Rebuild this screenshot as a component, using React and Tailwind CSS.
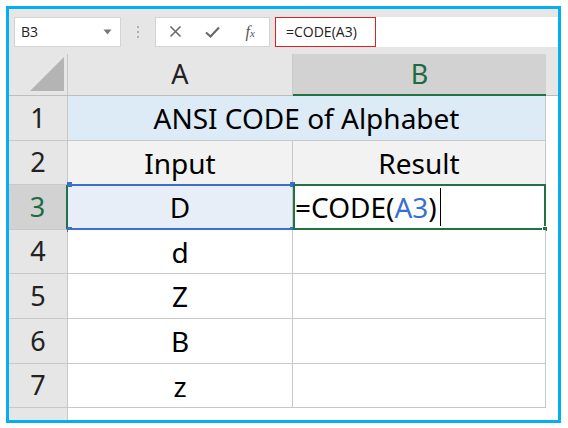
import React from "react";

const rowHeights = [45, 44, 45, 44, 45, 45, 44];

const cellFont = { fontFamily: '"Noto Sans", "Open Sans", sans-serif' };

const Handle = ({ className }) => (
  <div className={`absolute w-[5px] h-[5px] ${className}`} />
);

const Toolbar = () => (
  <div className="flex items-center h-[45px] pl-[5px] gap-0 bg-[#e6e6e6]">
    <div className="flex items-center justify-between w-[107px] h-[30px] bg-white border border-[#d4d4d4] pl-[6px] pr-[8px] text-[14px] text-[#222]" style={{ fontFamily: '"Open Sans", sans-serif' }}>
      <span>B3</span>
      <svg width="9" height="6" viewBox="0 0 9 6">
        <path d="M0.5 0.5 L8.5 0.5 L4.5 5.5 Z" fill="#777" />
      </svg>
    </div>
    <div className="flex flex-col items-center justify-center gap-[3px] w-[34px]">
      <div className="w-[2px] h-[2px] bg-[#b0b0b0]" />
      <div className="w-[2px] h-[2px] bg-[#b0b0b0]" />
      <div className="w-[2px] h-[2px] bg-[#b0b0b0]" />
    </div>
    <div className="flex items-center w-[115px] h-[30px] bg-white border border-[#d4d4d4]">
      <div className="w-[38px] flex justify-center pl-[2px]">
        <svg width="13" height="13" viewBox="0 0 13 13">
          <path d="M1.5 1.5 L11.5 11.5 M11.5 1.5 L1.5 11.5" stroke="#6a6a6a" strokeWidth="1.6" />
        </svg>
      </div>
      <div className="w-[38px] flex justify-center">
        <svg width="15" height="12" viewBox="0 0 15 12">
          <path d="M1 6.5 L5.5 10.5 L14 1.5" stroke="#6a6a6a" strokeWidth="2.2" fill="none" />
        </svg>
      </div>
      <div className="w-[38px] flex justify-center text-[16px] italic text-[#555]" style={{ fontFamily: '"Liberation Serif", serif' }}>
        <span>f</span>
        <span className="text-[11px] mt-[5px]">x</span>
      </div>
    </div>
    <div className="flex-1 h-[30px] ml-[5px] bg-white flex items-center">
      <div className="h-[30px] w-[101px] border border-[#e02020] flex items-center pl-[10px] text-[14px] text-[#222]" style={{ fontFamily: '"Open Sans", sans-serif' }}>
        =CODE(A3)
      </div>
    </div>
  </div>
);

const HeaderRow = () => (
  <div className="flex h-[42px] bg-[#e6e6e6] border-b border-[#bdbdbd]">
    <div className="w-[59px] border-r border-[#c8c8c8] flex items-end justify-end pr-[3px] pb-[4px]">
      <svg width="34" height="34" viewBox="0 0 34 34">
        <path d="M34 0 L34 34 L0 34 Z" fill="#b4b4b4" />
      </svg>
    </div>
    <div className="w-[225px] border-r border-[#c8c8c8] flex items-center justify-center text-[27px] text-[#222]" style={cellFont}>
      A
    </div>
    <div className="w-[253px] bg-[#d2d2d2] border-b-2 border-[#217346] flex items-center justify-center text-[27px] text-[#1e6b3f] -mb-px" style={cellFont}>
      B
    </div>
    <div className="flex-1" />
  </div>
);

const RowHead = ({ n, h, active }) => (
  <div
    className={`w-[59px] flex items-center justify-center text-[27px] border-b border-[#c8c8c8] ${
      active ? "bg-[#d2d2d2] text-[#1e6b3f] border-r-2 border-r-[#217346]" : "bg-[#e6e6e6] text-[#222] border-r border-r-[#c8c8c8]"
    }`}
    style={{ ...cellFont, height: h }}
  >
    {n}
  </div>
);

const data = [
  null,
  ["Input", "Result"],
  ["D", ""],
  ["d", ""],
  ["Z", ""],
  ["B", ""],
  ["z", ""],
];

export default function App() {
  return (
    <div className="w-[568px] h-[428px] bg-white pt-[6px] pl-[6px]">
      <div className="w-[555px] h-[417px] border-[3px] border-[#00b0f0] bg-white flex flex-col overflow-hidden">
        <Toolbar />
        <HeaderRow />
        {rowHeights.map((h, i) => {
          const n = i + 1;
          if (n === 1) {
            return (
              <div key={n} className="flex" style={{ height: h }}>
                <RowHead n={n} h={h} />
                <div className="w-[478px] bg-[#ddebf7] border-b border-r border-[#c8c8c8] flex items-center justify-center text-[28px] text-black" style={cellFont}>
                  ANSI CODE of Alphabet
                </div>
                <div className="flex-1" />
              </div>
            );
          }
          const [a, b] = data[i];
          const isActive = n === 3;
          return (
            <div key={n} className="flex" style={{ height: h }}>
              <RowHead n={n} h={h} active={isActive} />
              <div
                className={`relative w-[225px] border-b border-r border-[#c8c8c8] flex items-center justify-center text-[28px] text-black ${
                  isActive ? "bg-[#e8eef8]" : n === 2 ? "bg-[#f2f2f2]" : "bg-white"
                }`}
                style={cellFont}
              >
                {a}
                {isActive && (
                  <>
                    <div className="absolute left-0 right-[-1px] top-[-1px] bottom-[-1px] border-y-2 border-[#3a6fd0]" />
                    <Handle className="bg-[#3a6fd0] left-[-1px] top-[-3px]" />
                    <Handle className="bg-[#3a6fd0] right-[-3px] top-[-3px]" />
                    <Handle className="bg-[#3a6fd0] left-[-1px] bottom-[-3px]" />
                    <Handle className="bg-[#3a6fd0] right-[-3px] bottom-[-3px]" />
                  </>
                )}
              </div>
              <div
                className={`relative w-[253px] border-b border-r border-[#c8c8c8] flex items-center text-[28px] text-black ${
                  n === 2 ? "bg-[#f2f2f2] justify-center" : "bg-white justify-start"
                }`}
                style={cellFont}
              >
                {isActive ? (
                  <div className="flex items-center pl-[2px]">
                    <span>=CODE(</span>
                    <span className="text-[#3a6fd0]">A3</span>
                    <span>)</span>
                    <span className="w-px h-[38px] bg-black ml-[3px]" />
                  </div>
                ) : (
                  b
                )}
                {isActive && (
                  <>
                    <div className="absolute left-0 right-[-1px] top-[-1px] bottom-[-1px] border-2 border-[#217346]" />
                    <div className="absolute w-[6px] h-[6px] bg-[#217346] right-[-3px] bottom-[-3px] border border-white" />
                  </>
                )}
              </div>
              <div className="flex-1" />
            </div>
          );
        })}
        <div className="flex flex-1">
          <div className="w-[59px] bg-[#e6e6e6] border-r border-[#c8c8c8]" />
          <div className="flex-1" />
        </div>
      </div>
    </div>
  );
}
